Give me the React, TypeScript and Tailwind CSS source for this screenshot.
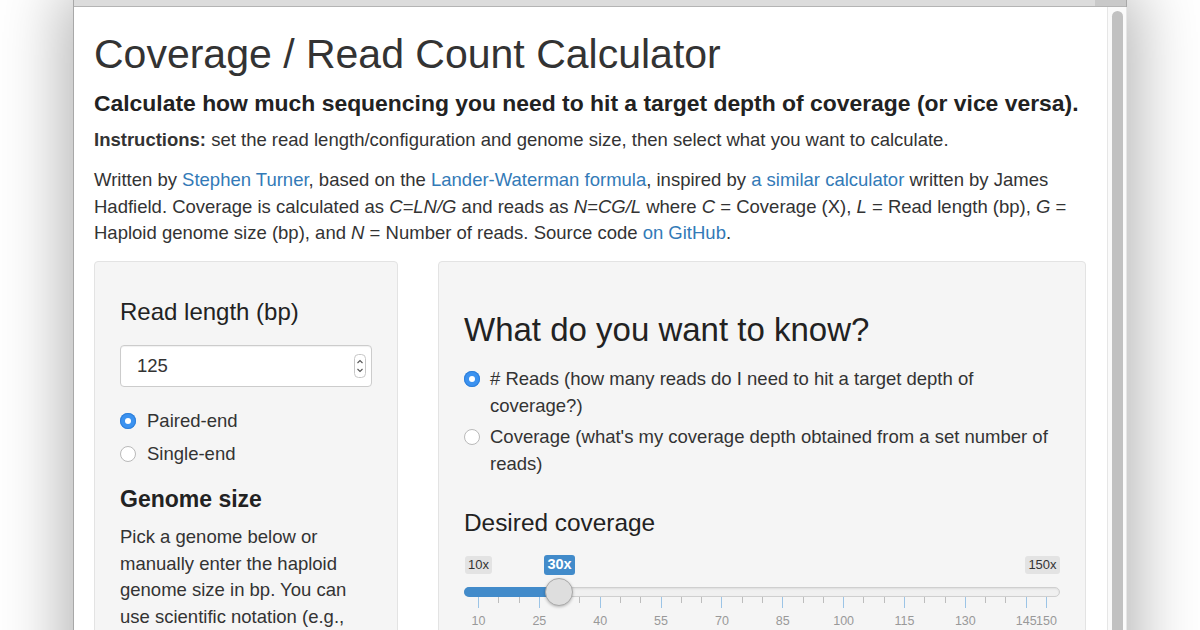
import React from "react";

const font = { fontFamily: '"Liberation Sans", Arial, Helvetica, sans-serif' };

function Radio({ checked }: { checked: boolean }) {
  return checked ? (
    <span className="flex h-[16px] w-[16px] shrink-0 items-center justify-center rounded-full bg-[#3b92f0] shadow-[inset_0_0_0_1px_#2f7fd9]">
      <span className="h-[6px] w-[6px] rounded-full bg-white" />
    </span>
  ) : (
    <span className="block h-[16px] w-[16px] shrink-0 rounded-full border border-[#b9b9b9] bg-white" />
  );
}

const ticks: number[] = [];
for (let v = 10; v <= 150; v += 5) ticks.push(v);
const majors = [10, 25, 40, 55, 70, 85, 100, 115, 130, 145, 150];
const pos = (v: number) => 14 + (v - 10) * 4.0571;

function Slider() {
  return (
    <div className="relative mt-[17px] h-[80px] w-[596px]">
      <div className="absolute left-[1px] top-[1px] flex h-[18px] w-[27px] items-center justify-center rounded-[3px] bg-[#e3e3e3] text-[13px] text-[#333]">
        10x
      </div>
      <div className="absolute left-[80px] top-0 flex h-[20px] w-[31px] items-center justify-center rounded-[3px] bg-[#428bca] text-[14.5px] font-bold text-white">
        30x
      </div>
      <div className="absolute left-[561px] top-[1px] flex h-[18px] w-[35px] items-center justify-center rounded-[3px] bg-[#e3e3e3] text-[13px] text-[#333]">
        150x
      </div>
      <div className="absolute left-0 top-[32px] h-[10px] w-[596px] rounded-full border border-[#cfcfcf] bg-[#f0f0f0] shadow-[inset_0_1px_2px_rgba(0,0,0,0.08)]" />
      <div className="absolute left-0 top-[32px] h-[10px] w-[95px] rounded-l-full bg-[#428bca]" />
      {ticks.map((v) => {
        const major = majors.includes(v);
        return (
          <div
            key={v}
            className={
              major
                ? "absolute top-[42px] h-[11px] w-px bg-[#9cc4e6]"
                : "absolute top-[42px] h-[6px] w-px bg-[#bdbdbd]"
            }
            style={{ left: pos(v) }}
          />
        );
      })}
      {majors.map((v) => (
        <div
          key={"l" + v}
          className="absolute top-[59px] w-[40px] -translate-x-1/2 text-center text-[12.5px] leading-[14px] text-[#999]"
          style={{ left: pos(v) + 0.5 }}
        >
          {v}
        </div>
      ))}
      <div className="absolute left-[81px] top-[23px] h-[28px] w-[28px] rounded-full border border-[#a9a9a9] bg-[#dedede] shadow-[0_1px_3px_rgba(0,0,0,0.25)]" />
    </div>
  );
}

export default function App() {
  return (
    <div className="relative flex h-[630px] w-[1200px] justify-center overflow-hidden bg-white text-[#333]" style={font}>
      <div className="flex h-[700px] w-[1054px] flex-col border-x border-[#a8a8a8] bg-white shadow-[0_0_60px_10px_rgba(0,0,0,0.3)]">
        <div className="flex h-[7px] shrink-0 border-b border-[#b4b4b4] bg-[#dcdcdc]">
          <div className="flex-1" />
          <div className="w-[31px] bg-[#c9c9c9]" />
        </div>
        <div className="flex flex-1">
          <div className="flex-1 pl-[20px] pr-[21px] pt-[25px]">
            <h1 className="whitespace-nowrap text-[41px] leading-[44px] text-[#333]">Coverage / Read Count Calculator</h1>
            <h3 className="mt-[12px] whitespace-nowrap text-[22.9px] font-bold leading-[30px] text-[#222]">
              Calculate how much sequencing you need to hit a target depth of coverage (or vice versa).
            </h3>
            <p className="mt-[9px] whitespace-nowrap text-[18.5px] leading-[26.5px]">
              <b>Instructions:</b> set the read length/configuration and genome size, then select what you want to calculate.
            </p>
            <p className="mt-[13.5px] whitespace-nowrap text-[18.5px] leading-[26.5px]">
              Written by <span className="text-[#337ab7]">Stephen Turner</span>, based on the{" "}
              <span className="text-[#337ab7]">Lander-Waterman formula</span>, inspired by{" "}
              <span className="text-[#337ab7]">a similar calculator</span> written by James
              <br />
              Hadfield. Coverage is calculated as <i>C=LN/G</i> and reads as <i>N=CG/L</i> where <i>C</i> = Coverage (X),{" "}
              <i>L</i> = Read length (bp), <i>G</i> =
              <br />
              Haploid genome size (bp), and <i>N</i> = Number of reads. Source code{" "}
              <span className="text-[#337ab7]">on GitHub</span>.
            </p>
            <div className="mt-[14px] flex gap-[40px]">
              <div className="h-[500px] w-[304px] shrink-0 rounded-[4px] border border-[#e3e3e3] bg-[#f5f5f5] px-[25px] pt-[35px]">
                <div className="whitespace-nowrap text-[24px] font-medium leading-[30px] text-[#222]">Read length (bp)</div>
                <div className="mt-[18px] flex h-[42px] items-center justify-between rounded-[4px] border border-[#cccccc] bg-white pl-[16px] pr-[5px] text-[18.5px] shadow-[inset_0_1px_1px_rgba(0,0,0,0.06)]">
                  <span>125</span>
                  <svg width="12" height="24" viewBox="0 0 12 24">
                    <rect x="0.5" y="0.5" width="11" height="23" rx="4" fill="#fff" stroke="#c7c7c7" />
                    <path d="M3.5 9 L6 6.5 L8.5 9" fill="none" stroke="#555" strokeWidth="1.1" />
                    <path d="M3.5 15 L6 17.5 L8.5 15" fill="none" stroke="#555" strokeWidth="1.1" />
                  </svg>
                </div>
                <div className="mt-[21px] flex h-[26px] items-center gap-[11px] text-[18.5px]">
                  <Radio checked />
                  <span>Paired-end</span>
                </div>
                <div className="mt-[7px] flex h-[26px] items-center gap-[11px] text-[18.5px]">
                  <Radio checked={false} />
                  <span>Single-end</span>
                </div>
                <div className="mt-[17px] whitespace-nowrap text-[23px] font-bold leading-[30px] text-[#222]">Genome size</div>
                <p className="mt-[10.75px] whitespace-nowrap text-[18.5px] leading-[26.5px]">
                  Pick a genome below or
                  <br />
                  manually enter the haploid
                  <br />
                  genome size in bp. You can
                  <br />
                  use scientific notation (e.g.,
                </p>
              </div>
              <div className="h-[500px] w-[648px] shrink-0 rounded-[4px] border border-[#e3e3e3] bg-[#f5f5f5] px-[25px] pt-[49px]">
                <div className="whitespace-nowrap text-[33px] font-medium leading-[38px] text-[#222]">What do you want to know?</div>
                <div className="mt-[17.75px] flex gap-[10px] whitespace-nowrap text-[18.5px] leading-[26.5px]">
                  <span className="mt-[5px] flex shrink-0">
                    <Radio checked />
                  </span>
                  <span>
                    # Reads (how many reads do I need to hit a target depth of
                    <br />
                    coverage?)
                  </span>
                </div>
                <div className="mt-[5px] flex gap-[10px] whitespace-nowrap text-[18.5px] leading-[26.5px]">
                  <span className="mt-[5px] flex shrink-0">
                    <Radio checked={false} />
                  </span>
                  <span>
                    Coverage (what's my coverage depth obtained from a set number of
                    <br />
                    reads)
                  </span>
                </div>
                <div className="mt-[30.25px] whitespace-nowrap text-[24.4px] font-medium leading-[30px] text-[#222]">Desired coverage</div>
                <Slider />
              </div>
            </div>
          </div>
          <div className="relative w-[20px] shrink-0 border-l border-r border-[#e6e6e6] bg-[#fafafa]">
            <div className="absolute left-[4px] top-[4px] h-[700px] w-[11px] rounded-full bg-[#c1c1c1]" />
          </div>
        </div>
      </div>
    </div>
  );
}
